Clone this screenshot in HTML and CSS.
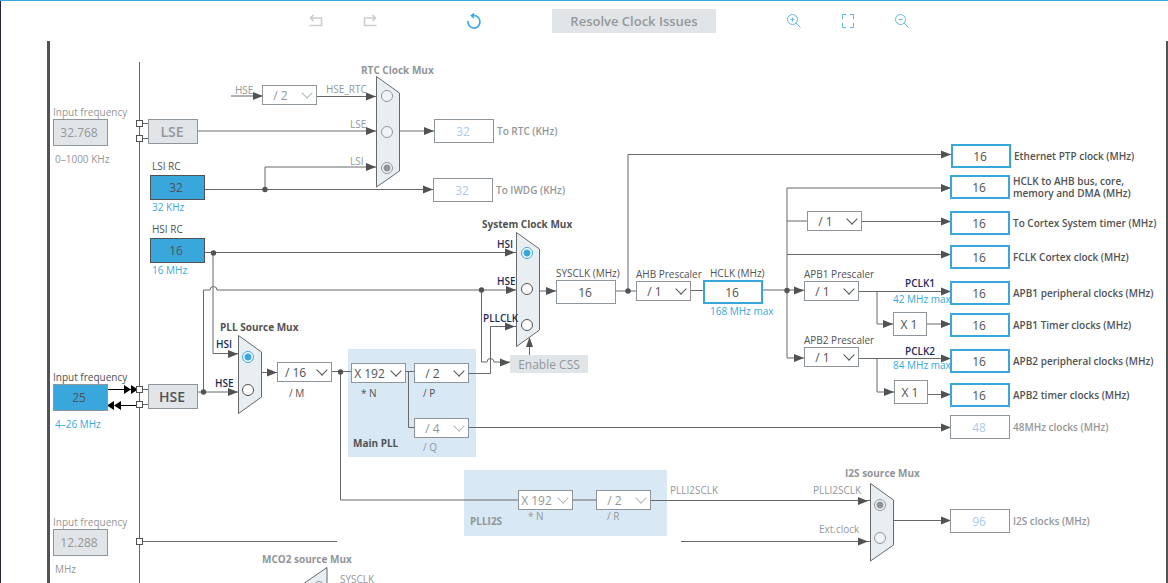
FILE: index.html
```
<!DOCTYPE html>
<html lang="en">
<head>
<meta charset="utf-8">
<title>Clock Configuration</title>
<link rel="stylesheet" href="styles.css">
</head>
<body>
<div class="window">
  <header class="toolbar">
    <div class="tools">
      <button class="tool" type="button" aria-label="Undo" disabled>
        <svg viewBox="0 0 16 16"><path class="i-grey" d="M2 5H13.500V12.500H1.500M5.500 2L2.500 5L5.500 8"/></svg>
      </button>
      <button class="tool" type="button" aria-label="Redo" disabled>
        <svg viewBox="0 0 16 16"><path class="i-grey" d="M14 5H2.500V12.500H14.500M10.500 2L13.500 5L10.500 8"/></svg>
      </button>
    </div>
    <button class="tool refresh" type="button" aria-label="Reset">
      <svg viewBox="0 0 16 16"><path class="i-bold" d="M2 8A6 6.300 0 1 0 8 2.500H5.500M8 .5L5.500 2.500L8 5"/></svg>
    </button>
    <button class="resolve" type="button" disabled>Resolve Clock Issues</button>
    <div class="tools">
      <button class="tool" type="button" aria-label="Zoom in">
        <svg viewBox="0 0 16 16"><path class="i-thin" d="M6.500 1.500A5 5 0 1 1 6.500 11.500A5 5 0 1 1 6.500 1.500M10.200 10.200L14.500 14.500M6.500 4.500V8.500M4.500 6.500H8.500"/></svg>
      </button>
      <button class="tool" type="button" aria-label="Fit">
        <svg viewBox="0 0 16 16"><path class="i-thin" d="M2.500 6V1.500H6M10 1.500H13.500V6M13.500 10V14.500H10M6 14.500H2.500V10"/></svg>
      </button>
      <button class="tool" type="button" aria-label="Zoom out">
        <svg viewBox="0 0 16 16"><path class="i-thin" d="M6.500 1.500A5 5 0 1 1 6.500 11.500A5 5 0 1 1 6.500 1.500M10.200 10.200L14.500 14.500M4.500 6.500H8.500"/></svg>
      </button>
    </div>
  </header>

  <main class="canvas">
    <svg class="wires" width="1168" height="542" viewBox="0 41 1168 542">
      <defs>
        <path id="r" d="M0 0L-10 -4V4Z"/>
        <circle id="d" r="2.700"/>
        <rect id="pin" x="-3" y="-3" width="6" height="6"/>
      </defs>

      <!-- PLL areas -->
      <rect class="area" x="348" y="349" width="128" height="108"/>
      <rect class="area" x="464" y="470" width="203" height="66"/>

      <!-- Wires -->
      <g class="w">
        <path d="M139.500 62V583"/>
        <path d="M143 123.500H148M143 138.500H148M143 389.500H148M143 404.500H148"/>
        <path d="M231 96H262M317 96.500H376M198 131H376M265 189V167H376M205 189.500H433M400 131H434"/>
        <path d="M205 252.500H516M213 253V353.500H238"/>
        <path d="M198 392H238M203.500 392V290H210A3.500 3.500 0 0 1 217 290H516"/>
        <path d="M481.500 290V362H487A3.500 3.500 0 0 1 494 362H510"/>
        <path d="M469 373.500H490.500V326.500H516M529.500 355V340"/>
        <path d="M262 372.500H277M332 371.500H351M406 371.500H414M408.500 371.500V427.500H414M340.500 371.500V500H518M573 500H596M651 500.500H870"/>
        <path d="M540 291H556M616 291H636M628 291V154.500H951M691 290.500H703M763 290H804"/>
        <path d="M804 358H787V188H950M787 221H807M862 221.500H950M787 254.500H950"/>
        <path d="M859 291.500H950M877 291.500V324H893M927 324H950M859 358.500H950M877 358.500V392H894M928 394.500H950"/>
        <path d="M469 427.500H950M894 520.500H951M681 541.500H870M143 541.500H337"/>
      </g>

      <!-- Oscillator pins -->
      <g class="osc">
        <path d="M108 389.500H136M120 405.500H136"/>
        <path class="tip" d="M131 389.500L124 385V394ZM138 389.500L131 385V394ZM114 405.500L121 401V410ZM107 405.500L114 401V410Z"/>
      </g>
      <g class="pin">
        <use href="#pin" x="139.500" y="123.500"/><use href="#pin" x="139.500" y="138.500"/>
        <use href="#pin" x="139.500" y="389.500"/><use href="#pin" x="139.500" y="404.500"/>
        <use href="#pin" x="139.500" y="541.500"/>
      </g>

      <!-- Multiplexers -->
      <g class="mux">
        <path d="M376.500 76.500L399.500 93V171L376.500 187Z"/>
        <path d="M516.500 232.500L539.500 249V330L516.500 346.500Z"/>
        <path d="M238.500 335.500L261.500 352V397L238.500 413.500Z"/>
        <path d="M870.500 483.500L893.500 500V545L870.500 561Z"/>
        <path d="M327 567.500L303 584V640H327Z"/>
      </g>

      <!-- Arrow heads and junctions -->
      <g class="solid">
        <use href="#r" x="263" y="96"/><use href="#r" x="376" y="96.500"/>
        <use href="#r" x="376" y="131"/><use href="#r" x="376" y="167"/>
        <use href="#r" x="434" y="131"/><use href="#r" x="433" y="189.500"/>
        <use href="#r" x="515" y="252.500"/><use href="#r" x="516" y="290"/><use href="#r" x="515" y="326.500"/>
        <use href="#r" x="238" y="354"/><use href="#r" x="238" y="392"/><use href="#r" x="277" y="372.500"/>
        <use href="#r" x="510" y="362.500"/><use href="#r" x="556" y="291"/><use href="#r" x="804" y="290.500"/>
        <use href="#r" x="951" y="154.500"/><use href="#r" x="951" y="188"/><use href="#r" x="951" y="221.500"/>
        <use href="#r" x="951" y="254.500"/><use href="#r" x="951" y="291.500"/><use href="#r" x="893" y="324"/>
        <use href="#r" x="951" y="324"/><use href="#r" x="804" y="358"/><use href="#r" x="951" y="358.500"/>
        <use href="#r" x="894" y="392"/><use href="#r" x="951" y="394.500"/><use href="#r" x="951" y="427.500"/>
        <use href="#r" x="868" y="501"/><use href="#r" x="868" y="541.500"/><use href="#r" x="951" y="520.500"/>
        <path d="M529.500 337L533 347H526Z"/>
        <use href="#d" x="265" y="189.500"/><use href="#d" x="213.500" y="253"/><use href="#d" x="203.500" y="392"/>
        <use href="#d" x="481.500" y="290"/><use href="#d" x="628" y="291"/><use href="#d" x="787" y="290.500"/>
        <use href="#d" x="340.500" y="372"/>
      </g>

      <!-- Signal names -->
      <g class="off">
        <text x="235" y="94">HSE</text><text x="326" y="93">HSE_RTC</text>
        <text x="350" y="128">LSE</text><text x="350" y="165">LSI</text>
        <text x="423" y="451">/ Q</text><text x="528" y="520">* N</text><text x="607" y="520">/ R</text>
        <text x="670" y="494">PLLI2SCLK</text><text x="813" y="494">PLLI2SCLK</text>
        <text x="819" y="533">Ext.clock</text><text x="340" y="583">SYSCLK</text>
      </g>
      <g class="on">
        <text x="289" y="397">/ M</text><text x="361" y="397">* N</text><text x="423" y="397">/ P</text>
      </g>
      <g class="sig">
        <text x="497" y="248">HSI</text><text x="497" y="285">HSE</text><text x="483" y="322">PLLCLK</text>
        <text x="216" y="348">HSI</text><text x="215" y="387">HSE</text>
        <text x="905" y="287">PCLK1</text><text x="905" y="355">PCLK2</text>
      </g>
      <g class="max">
        <text x="893" y="303">42 MHz max</text><text x="893" y="369">84 MHz max</text>
      </g>
      <g class="head">
        <text x="220" y="331">PLL Source Mux</text><text x="482" y="228">System Clock Mux</text>
        <text x="353" y="447">Main PLL</text>
      </g>
      <g class="head dim">
        <text x="361" y="74">RTC Clock Mux</text><text x="845" y="477">I2S source Mux</text>
        <text x="262" y="563">MCO2 source Mux</text><text x="470" y="525">PLLI2S</text>
      </g>
    </svg>

    <!-- Sources -->
    <div class="node osc-in dim p-lse-in"><label for="lseIn">Input frequency</label><input id="lseIn" value="32.768" disabled><span>0–1000 KHz</span></div>
    <div class="node osc-in live p-hse-in"><label for="hseIn">Input frequency</label><input id="hseIn" value="25"><span>4–26 MHz</span></div>
    <div class="node osc-in dim p-i2s-in"><label for="i2sIn">Input frequency</label><input id="i2sIn" value="12.288" disabled><span>MHz</span></div>
    <button class="node source dim p-lse" type="button" disabled>LSE</button>
    <button class="node source p-hse" type="button">HSE</button>
    <div class="node rc p-lsi"><label for="lsi">LSI RC</label><input id="lsi" value="32" readonly><span>32 KHz</span></div>
    <div class="node rc p-hsi"><label for="hsi">HSI RC</label><input id="hsi" value="16" readonly><span>16 MHz</span></div>

    <!-- Multiplexer choices -->
    <div class="node choices dim p-mux-rtc" role="radiogroup" aria-label="RTC Clock Mux">
      <input type="radio" name="rtc" aria-label="HSE_RTC" disabled><input type="radio" name="rtc" aria-label="LSE" disabled><input type="radio" name="rtc" aria-label="LSI" checked disabled>
    </div>
    <div class="node choices p-mux-sys" role="radiogroup" aria-label="System Clock Mux">
      <input type="radio" name="sys" aria-label="HSI" checked><input type="radio" name="sys" aria-label="HSE"><input type="radio" name="sys" aria-label="PLLCLK">
    </div>
    <div class="node choices near p-mux-pll" role="radiogroup" aria-label="PLL Source Mux">
      <input type="radio" name="pll" aria-label="HSI" checked><input type="radio" name="pll" aria-label="HSE">
    </div>
    <div class="node choices near dim p-mux-i2s" role="radiogroup" aria-label="I2S source Mux">
      <input type="radio" name="i2s" aria-label="PLLI2SCLK" checked disabled><input type="radio" name="i2s" aria-label="Ext.clock" disabled>
    </div>
    <div class="node choices dim p-mux-mco" role="radiogroup" aria-label="MCO2 source Mux">
      <input type="radio" name="mco" aria-label="SYSCLK" disabled>
    </div>
    <button class="node css-button p-css" type="button" disabled>Enable CSS</button>

    <!-- Dividers and multipliers -->
    <div class="node pick dim p-rtc-div"><select aria-label="HSE_RTC divider" disabled><option>/ 2</option></select></div>
    <div class="node pick p-m"><select aria-label="PLL M"><option>/ 16</option></select></div>
    <div class="node pick p-n"><select aria-label="PLL N"><option>X 192</option></select></div>
    <div class="node pick p-p"><select aria-label="PLL P"><option>/ 2</option></select></div>
    <div class="node pick dim p-q"><select aria-label="PLL Q" disabled><option>/ 4</option></select></div>
    <div class="node pick dim p-i2s-n"><select aria-label="PLLI2S N" disabled><option>X 192</option></select></div>
    <div class="node pick dim p-i2s-r"><select aria-label="PLLI2S R" disabled><option>/ 2</option></select></div>
    <div class="node pick p-ctx"><select aria-label="Cortex timer divider"><option>/ 1</option></select></div>
    <div class="node stack p-ahb"><label for="ahb">AHB Prescaler</label><div class="pick"><select id="ahb"><option>/ 1</option></select></div></div>
    <div class="node stack p-apb1"><label for="apb1">APB1 Prescaler</label><div class="pick"><select id="apb1"><option>/ 1</option></select></div></div>
    <div class="node stack p-apb2"><label for="apb2">APB2 Prescaler</label><div class="pick"><select id="apb2"><option>/ 1</option></select></div></div>
    <input class="node times p-x1" aria-label="APB1 timer multiplier" value="X 1" readonly>
    <input class="node times p-x2" aria-label="APB2 timer multiplier" value="X 1" readonly>

    <!-- Clocks -->
    <div class="node stack p-sys"><label for="sys">SYSCLK (MHz)</label><input class="value" id="sys" value="16" readonly></div>
    <div class="node stack hclk p-hclk"><label for="hclk">HCLK (MHz)</label><input class="value live" id="hclk" value="16"><span>168 MHz max</span></div>
    <div class="node out dim p-rtc"><input class="value" id="oRtc" value="32" disabled><label for="oRtc">To RTC (KHz)</label></div>
    <div class="node out dim p-iwdg"><input class="value" id="oIwdg" value="32" disabled><label for="oIwdg">To IWDG (KHz)</label></div>
    <div class="node out p-eth"><input class="value live" id="oEth" value="16"><label for="oEth">Ethernet PTP clock (MHz)</label></div>
    <div class="node out p-ahbbus"><input class="value live" id="oAhb" value="16"><label for="oAhb">HCLK to AHB bus, core,<br>memory and DMA (MHz)</label></div>
    <div class="node out p-cortex"><input class="value live" id="oCtx" value="16"><label for="oCtx">To Cortex System timer (MHz)</label></div>
    <div class="node out p-fclk"><input class="value live" id="oFclk" value="16"><label for="oFclk">FCLK Cortex clock (MHz)</label></div>
    <div class="node out p-a1p"><input class="value live" id="oA1p" value="16"><label for="oA1p">APB1 peripheral clocks (MHz)</label></div>
    <div class="node out p-a1t"><input class="value live" id="oA1t" value="16"><label for="oA1t">APB1 Timer clocks (MHz)</label></div>
    <div class="node out p-a2p"><input class="value live" id="oA2p" value="16"><label for="oA2p">APB2 peripheral clocks (MHz)</label></div>
    <div class="node out p-a2t"><input class="value live" id="oA2t" value="16"><label for="oA2t">APB2 timer clocks (MHz)</label></div>
    <div class="node out dim p-48"><input class="value" id="o48" value="48" disabled><label for="o48">48MHz clocks (MHz)</label></div>
    <div class="node out dim p-i2s"><input class="value" id="oI2s" value="96" disabled><label for="oI2s">I2S clocks (MHz)</label></div>
  </main>
</div>
</body>
</html>
```
FILE: styles.css
```
* { box-sizing: border-box; }

body {
  margin: 0;
  background: #fff;
  color: #505253;
  font: 500 10px/14px "Open Sans", "Noto Sans", sans-serif;
}

button, input, select {
  margin: 0;
  padding: 0;
  color: inherit;
  font-family: inherit;
  border-radius: 0;
}

/* Window and toolbar */
.window {
  display: flex;
  flex-direction: column;
  height: 100vh;
  border-top: 1px solid #39a7dc;
  box-shadow: inset 1px 0 #252739;
  overflow: hidden;
}
.toolbar {
  display: flex;
  align-items: center;
  flex: none;
  gap: 70px;
  height: 40px;
  padding-left: 308px;
}
.tools { display: flex; gap: 38px; }
.tool { width: 16px; height: 16px; border: 0; background: none; }
.tool svg { display: block; width: 16px; height: 16px; fill: none; }
.refresh { margin-left: 18px; }
.i-grey { stroke: #cdcdcd; stroke-width: 1.6; }
.i-bold { stroke: #39a9dc; stroke-width: 1.6; }
.i-thin { stroke: #5fb9e3; stroke-width: 1; }
.resolve {
  width: 164px;
  height: 24px;
  border: 0;
  background: #e1e5e8;
  color: #949799;
  font-size: 13px;
  font-weight: 600;
}

/* Diagram canvas */
.canvas { position: relative; flex: 1; overflow: hidden; }
.canvas::before, .canvas::after {
  content: "";
  position: absolute;
  top: 0;
  bottom: 0;
  background: #505253;
}
.canvas::before { left: 47px; width: 3px; }
.canvas::after { right: 0; width: 2px; }
.wires { display: block; }
.w { fill: none; stroke: #66686a; }
.osc { stroke: #000; }
.tip { stroke: none; }
.pin { fill: #fff; stroke: #505253; }
.mux { fill: #e9eef2; stroke: #65696c; }
.solid { fill: #505253; }
.area { fill: #d9e8f5; }
.off { fill: #949799; }
.on { fill: #505253; }
.sig { fill: #1c2b58; font-weight: 600; }
.max { fill: #39a9dc; }
.head { fill: #505253; font-weight: 700; }
.head.dim { fill: #929597; }

.node { position: absolute; }
.dim { color: #949799; }
.node span { color: #39a9dc; white-space: nowrap; }
.node label { white-space: nowrap; }

/* Frequency sources */
.osc-in, .rc, .stack { display: flex; flex-direction: column; align-items: flex-start; }
.osc-in input, .rc input {
  width: 55px;
  height: 27px;
  padding-right: 3px;
  border: 1px solid #8f969b;
  background: #e1e5e8;
  font-size: 12px;
  font-weight: 500;
  text-align: center;
}
.osc-in span { margin: 6px 0 0 2px; }
.osc-in.dim span { color: #949799; }
.osc-in.live input { background: #39a7dc; }
.rc label { margin: 0 0 2px 2px; }
.rc input { height: 25px; border-color: #505253; background: #39a7dc; }
.rc span { margin-left: 2px; }
.source {
  width: 50px;
  height: 25px;
  padding-right: 2px;
  border: 1px solid #8f969b;
  background: #e1e5e8;
  font-size: 14px;
  font-weight: 600;
}
.css-button { width: 78px; height: 18px; border: 0; background: #e1e5e8; color: #949799; font-size: 12px; }

/* Radio choices inside a multiplexer */
.choices { display: flex; flex-direction: column; gap: 24px; }
.choices.near { gap: 21px; }
.choices input {
  appearance: none;
  width: 12px;
  height: 12px;
  border: 1px solid #505253;
  border-radius: 50%;
  background: #fff;
}
.choices input:checked { border-color: #39a7dc; background: radial-gradient(circle, #39a7dc 3px, #fff 4px); }
.choices.dim input { border-color: #8f969b; background: #f2f5f7; }
.choices.dim input:checked { background: radial-gradient(circle, #8f969b 3px, #f2f5f7 4px); }

/* Drop-downs */
.pick { width: 55px; height: 20px; }
.stack .pick { position: relative; }
.pick::after {
  content: "";
  position: absolute;
  right: 6px;
  bottom: 8px;
  width: 7px;
  height: 7px;
  border: solid currentColor;
  border-width: 0 1px 1px 0;
  transform: rotate(45deg);
  pointer-events: none;
}
.pick.dim::after { border-color: #b4b7b9; }
.pick select {
  appearance: none;
  width: 100%;
  height: 100%;
  padding-right: 18px;
  border: 1px solid #8f969b;
  background: #fff;
  font-size: 12px;
  text-align-last: center;
  opacity: 1;
}

/* Values */
.value, .times {
  width: 60px;
  height: 24px;
  padding-right: 2px;
  border: 1px solid #8f969b;
  background: #fff;
  font-size: 12px;
  text-align: center;
}
.value.live { border: 2px solid #39a7dc; }
.times { width: 34px; }
.dim .value { color: #aecbe8; }
.hclk label, .hclk span { margin-left: 7px; }
.out { display: flex; align-items: center; gap: 3px; }
.out input { flex: none; }
.out label { font-weight: 600; line-height: 12px; }

/* Node places on the canvas */
.p-lse-in { left: 53px; top: 64px; }
.p-hse-in { left: 53px; top: 329px; }
.p-i2s-in { left: 53px; top: 474px; }
.p-lse { left: 148px; top: 78px; }
.p-hse { left: 148px; top: 343px; }
.p-lsi { left: 150px; top: 118px; }
.p-hsi { left: 150px; top: 181px; }
.p-mux-rtc { left: 381px; top: 49px; }
.p-mux-sys { left: 521px; top: 206px; }
.p-mux-pll { left: 242px; top: 310px; }
.p-mux-i2s { left: 874px; top: 458px; }
.p-mux-mco { left: 313px; top: 540px; }
.p-css { left: 510px; top: 314px; }
.p-rtc-div { left: 262px; top: 44px; }
.p-m { left: 277px; top: 321px; }
.p-n { left: 351px; top: 322px; }
.p-p { left: 414px; top: 322px; }
.p-q { left: 414px; top: 377px; }
.p-i2s-n { left: 518px; top: 449px; }
.p-i2s-r { left: 596px; top: 449px; }
.p-ctx { left: 807px; top: 170px; }
.p-ahb { left: 636px; top: 226px; }
.p-apb1 { left: 804px; top: 226px; }
.p-apb2 { left: 804px; top: 292px; }
.p-x1 { left: 893px; top: 271px; }
.p-x2 { left: 894px; top: 339px; }
.p-sys { left: 556px; top: 225px; }
.p-hclk { left: 703px; top: 225px; }
.p-rtc { left: 434px; top: 78px; }
.p-iwdg { left: 433px; top: 137px; }
.p-eth { left: 951px; top: 103px; }
.p-ahbbus { left: 950px; top: 134px; }
.p-cortex { left: 950px; top: 170px; }
.p-fclk { left: 950px; top: 204px; }
.p-a1p { left: 950px; top: 240px; }
.p-a1t { left: 950px; top: 272px; }
.p-a2p { left: 950px; top: 308px; }
.p-a2t { left: 950px; top: 342px; }
.p-48 { left: 950px; top: 374px; }
.p-i2s { left: 950px; top: 468px; }
```
